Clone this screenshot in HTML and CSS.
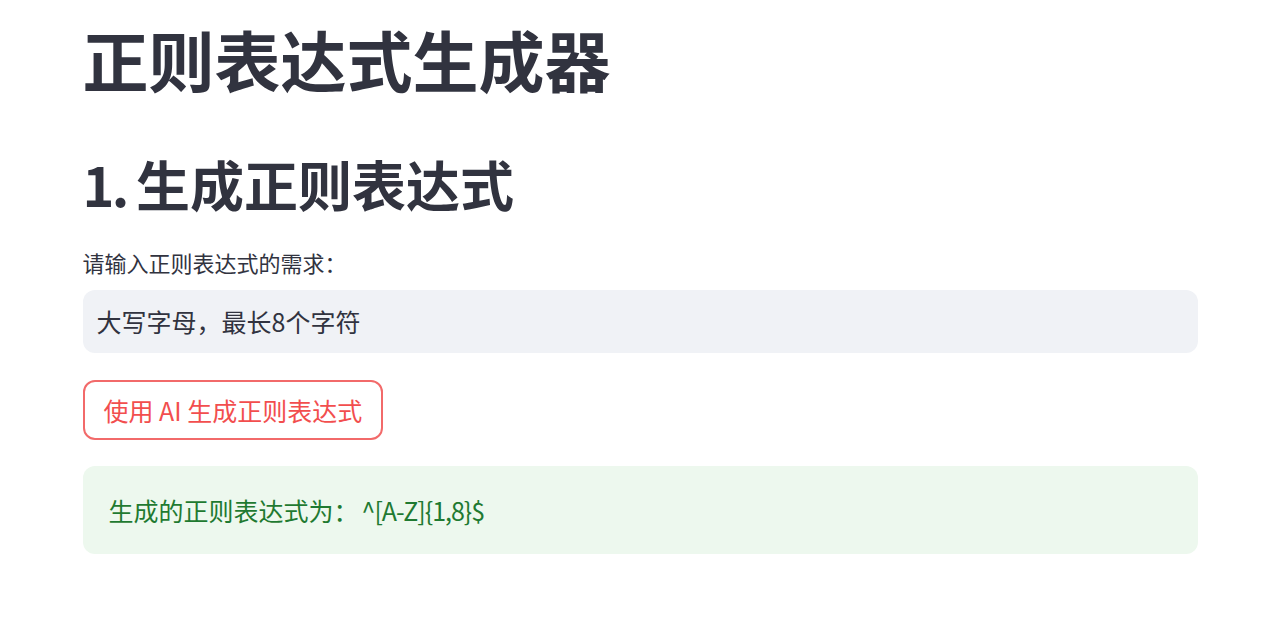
FILE: index.html
```html
<!DOCTYPE html>
<html lang="zh-CN">
<head>
    <meta charset="UTF-8">
    <meta name="viewport" content="width=device-width, initial-scale=1.0">
    <title>正则表达式生成器</title>
    <link rel="stylesheet" href="styles.css">
</head>
<body>

<div class="container">
    <h1>正则表达式生成器</h1>
    <h2><span class="num">1. </span>生成正则表达式</h2>

    <label for="need">请输入正则表达式的需求：</label>
    <input type="text" id="need" value="大写字母，最长8个字符">

    <button type="button" class="btn">使用 AI 生成正则表达式</button>

    <div class="success">生成的正则表达式为：<span class="latin">^[A-Z]{1,8}$</span></div>
</div>

</body>
</html>
```

FILE: styles.css
```css
/* Reset and basic styles */
* {
    box-sizing: border-box;
    margin: 0;
    padding: 0;
}

body {
    font-family: "Noto Sans CJK SC", "Noto Sans", sans-serif;
    background: #fff;
    color: #31333f;
    font-size: 25px;
}

.container {
    width: 1115px;
    margin: 0 auto;
    padding-top: 19px;
    display: flex;
    flex-direction: column;
    align-items: flex-start;
}

h1 {
    font-size: 66px;
    font-weight: 700;
    line-height: 1.2;
}

h2 {
    font-size: 54px;
    font-weight: 700;
    line-height: 1.2;
    margin-top: 54px;
}

h2 .num {
    letter-spacing: -2.7px;
}

label {
    font-size: 22px;
    line-height: 1.45;
    margin-top: 30px;
}

input {
    margin-top: 11px;
    width: 100%;
    height: 63px;
    padding: 0 14px;
    border: none;
    border-radius: 12px;
    background-color: #f0f2f6;
    font: inherit;
    font-size: 25px;
    color: #31333f;
    outline: none;
}

.btn {
    margin-top: 27px;
    height: 60px;
    padding: 0 19px;
    background-color: #fff;
    color: #f24e4e;
    border: 2px solid #f26a6a;
    border-radius: 12px;
    font: inherit;
    font-size: 25px;
    cursor: pointer;
}

.success {
    margin-top: 26px;
    width: 100%;
    height: 88px;
    padding: 0 26px;
    display: flex;
    align-items: center;
    background-color: #edf8ee;
    color: #1f7a31;
    border-radius: 12px;
    font-size: 25px;
}

.success .latin {
    margin-left: 3px;
    letter-spacing: -1px;
}
```
